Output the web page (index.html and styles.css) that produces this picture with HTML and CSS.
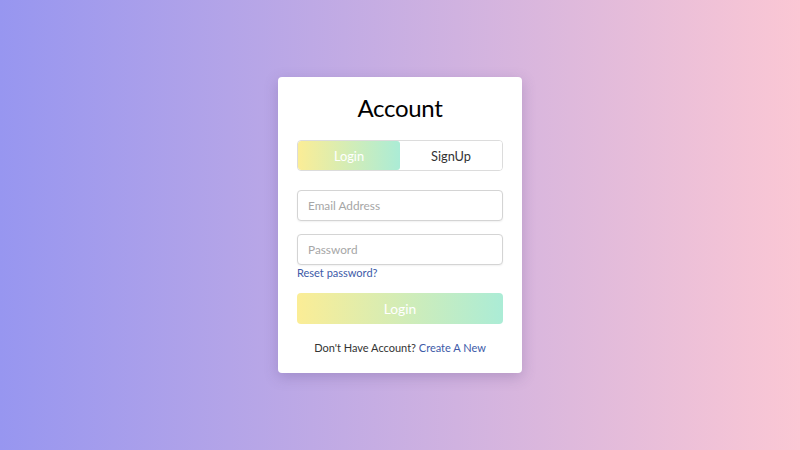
FILE: index.html
```html
<!DOCTYPE html>
<html lang="en">
<head>
<meta charset="utf-8">
<title>Account</title>
<link rel="stylesheet" href="styles.css">
</head>
<body>
<main class="page">
  <section class="card">
    <h1 class="title">Account</h1>
    <div class="toggle">
      <button class="tab tab-active" type="button">Login</button>
      <button class="tab" type="button">SignUp</button>
    </div>
    <input class="field field-email" type="email" placeholder="Email Address">
    <input class="field field-password" type="password" placeholder="Password">
    <a class="reset" href="#">Reset password?</a>
    <button class="submit" type="button">Login</button>
    <p class="footer">Don't Have Account? <a class="footer-link" href="#">Create A New</a></p>
  </section>
</main>
</body>
</html>
```
FILE: styles.css
```css
* { box-sizing: border-box; }
html, body { margin: 0; height: 100%; }
body {
  font-family: "Lato", "Open Sans", sans-serif;
  font-weight: 300;
  background: linear-gradient(to right, #9796f0, #fbc7d4);
}
.page {
  height: 450px;
  display: flex;
  align-items: center;
  justify-content: center;
}
.card {
  width: 244px;
  background: #fff;
  border-radius: 4px;
  padding: 16px 19px 17px;
  display: flex;
  flex-direction: column;
  box-shadow: 0 4px 14px rgba(80, 60, 120, 0.25);
}
.title {
  margin: 0 0 17px;
  font-size: 24px;
  line-height: 30px;
  font-weight: 400;
  letter-spacing: -0.3px;
  text-align: center;
  color: #000;
}
.toggle {
  display: flex;
  height: 31px;
  border: 1px solid #dcdcdc;
  border-radius: 4px;
  overflow: hidden;
  margin-bottom: 19px;
}
.tab {
  flex: 1;
  border: 0;
  background: #fff;
  font-family: inherit;
  font-weight: 400;
  font-size: 12.8px;
  color: #333;
  padding: 0;
}
.tab-active {
  background: linear-gradient(to right, #fbed96, #abecd6);
  color: #fff;
  border-radius: 3px;
}
.field {
  height: 31px;
  width: 100%;
  border: 1px solid #d4d4d4;
  border-radius: 4px;
  padding: 0 10px;
  font-family: inherit;
  font-weight: 400;
  font-size: 11.8px;
  color: #333;
  box-shadow: 0 1px 2px rgba(0,0,0,0.06);
}
.field::placeholder { color: #a6a6a6; }
.field-email { margin-bottom: 13px; }
.reset {
  font-size: 11px;
  font-weight: 400;
  line-height: 16px;
  color: #3d5aa8;
  text-decoration: none;
  margin-bottom: 12px;
  align-self: flex-start;
}
.submit {
  height: 31px;
  border: 0;
  border-radius: 4px;
  background: linear-gradient(to right, #fbed96, #abecd6);
  color: #fff;
  font-family: inherit;
  font-weight: 400;
  font-size: 13.8px;
}
.footer {
  margin: 16px 0 0;
  font-size: 11px;
  font-weight: 400;
  line-height: 16px;
  text-align: center;
  color: #333;
}
.footer-link {
  color: #3d5aa8;
  text-decoration: none;
}
```
